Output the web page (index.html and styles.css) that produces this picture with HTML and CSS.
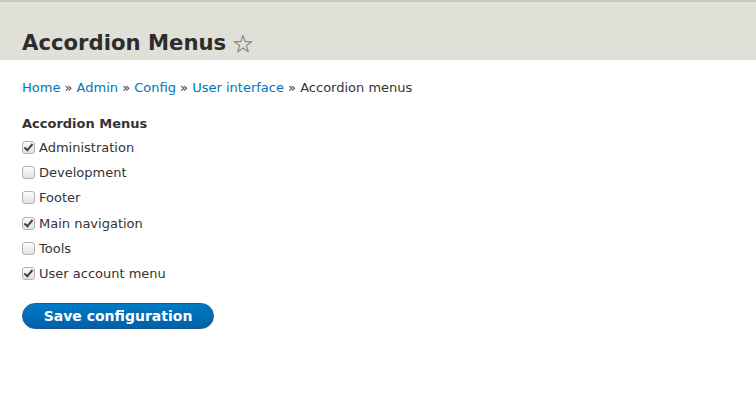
FILE: index.html
```html
<!DOCTYPE html>
<html>
<head>
<meta charset="utf-8">
<link rel="stylesheet" href="styles.css">
</head>
<body>
<header class="page-header">
  <h1 class="title">Accordion Menus <svg class="star" width="20" height="20" viewBox="0 0 20 20"><path d="M10 1.5 L12.1 7.6 L18.6 7.7 L13.4 11.6 L15.3 17.8 L10 14.1 L4.7 17.8 L6.6 11.6 L1.4 7.7 L7.9 7.6 Z" fill="none" stroke="#8a8b84" stroke-width="1.2" stroke-linejoin="round"/></svg></h1>
</header>
<main class="content">
  <nav class="breadcrumb"><a href="#">Home</a> » <a href="#">Admin</a> » <a href="#">Config</a> » <a href="#">User interface</a> » Accordion menus</nav>
  <form class="form">
    <div class="label">Accordion Menus</div>
    <div class="checks">
      <label class="check"><input type="checkbox" checked> Administration</label>
      <label class="check"><input type="checkbox"> Development</label>
      <label class="check"><input type="checkbox"> Footer</label>
      <label class="check"><input type="checkbox" checked> Main navigation</label>
      <label class="check"><input type="checkbox"> Tools</label>
      <label class="check"><input type="checkbox" checked> User account menu</label>
    </div>
    <button type="button" class="btn">Save configuration</button>
  </form>
</main>
</body>
</html>
```
FILE: styles.css
```css
html, body { margin: 0; padding: 0; background: #fff; }
body { font-family: "DejaVu Sans", sans-serif; color: #333; font-size: 13px; }
.page-header {
  background: #dfe0d8;
  border-top: 2px solid #c6c8c0;
  height: 58px;
  padding: 0 22px;
  box-sizing: content-box;
}
.title {
  margin: 0;
  padding-top: 27px;
  font-size: 21.2px;
  line-height: 28px;
  font-weight: bold;
  color: #2d2d2d;
  display: flex;
  align-items: center;
  gap: 7px;
}
.star { margin-top: 1px; }
.content { padding: 0 22px; }
.breadcrumb { margin-top: 19px; line-height: 17px; }
.breadcrumb a { color: #0074bd; text-decoration: none; }
.form { margin-top: 20px; }
.label { font-weight: bold; line-height: 16px; margin-bottom: 3px; }
.checks { display: flex; flex-direction: column; }
.check { display: flex; align-items: center; height: 25.2px; }
.check input {
  -webkit-appearance: none;
  appearance: none;
  margin: 0 4px 0 0;
  width: 13px;
  height: 13px;
  border: 1px solid #b3b3b3;
  border-radius: 3px;
  background: linear-gradient(#fcfcfc, #e2e2e2);
  position: relative;
  box-sizing: border-box;
}
.check input:checked::after {
  content: "";
  position: absolute;
  left: 3px;
  top: 0px;
  width: 3px;
  height: 7px;
  border: solid #444;
  border-width: 0 2px 2px 0;
  transform: rotate(40deg);
}
.btn {
  margin-top: 17px;
  width: 192px;
  height: 26px;
  border-radius: 13px;
  border: 1px solid #1e5c90;
  background: linear-gradient(#007bc6, #0060a8);
  color: #fff;
  font-family: "DejaVu Sans", sans-serif;
  font-weight: bold;
  font-size: 14px;
  padding: 0;
}
```
